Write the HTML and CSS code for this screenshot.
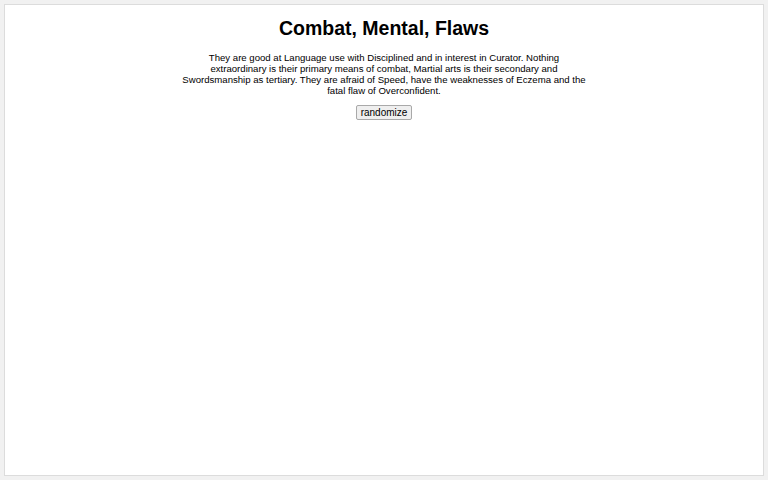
FILE: index.html
```html
<!DOCTYPE html>
<html lang="en">
<head>
    <meta charset="UTF-8">
    <meta name="viewport" content="width=device-width, initial-scale=1.0">
    <title>Combat, Mental, Flaws</title>
    <link rel="stylesheet" href="styles.css">
</head>
<body>
    <div class="sheet">
        <h1>Combat, Mental, Flaws</h1>
        <p class="summary">They are good at Language use with Disciplined and in interest in Curator. Nothing extraordinary is their primary means of combat, Martial arts is their secondary and Swordsmanship as tertiary. They are afraid of Speed, have the weaknesses of Eczema and the fatal flaw of Overconfident.</p>
        <button id="randomize">randomize</button>
    </div>
</body>
</html>
```

FILE: styles.css
```css
html, body {
    height: 100%;
}
body {
    margin: 0;
    padding: 4px;
    box-sizing: border-box;
    background: #f1f1f1;
    font-family: "Liberation Sans", Arial, sans-serif;
    color: #000;
}
.sheet {
    height: 100%;
    box-sizing: border-box;
    background: #fff;
    border: 1px solid #dcdcdc;
    display: flex;
    flex-direction: column;
    align-items: center;
    padding-top: 12px;
}
h1 {
    font-size: 19.5px;
    margin: 0 0 12px;
}
.summary {
    max-width: 404px;
    font-size: 9.6px;
    line-height: 11px;
    text-align: center;
    margin: 0 0 9px;
}
button {
    font-family: "Liberation Sans", Arial, sans-serif;
    font-size: 10px;
    line-height: 11px;
    padding: 1px 4px;
    background: #efefef;
    border: 1px solid #a9a9a9;
    border-radius: 2px;
    color: #000;
}
```
